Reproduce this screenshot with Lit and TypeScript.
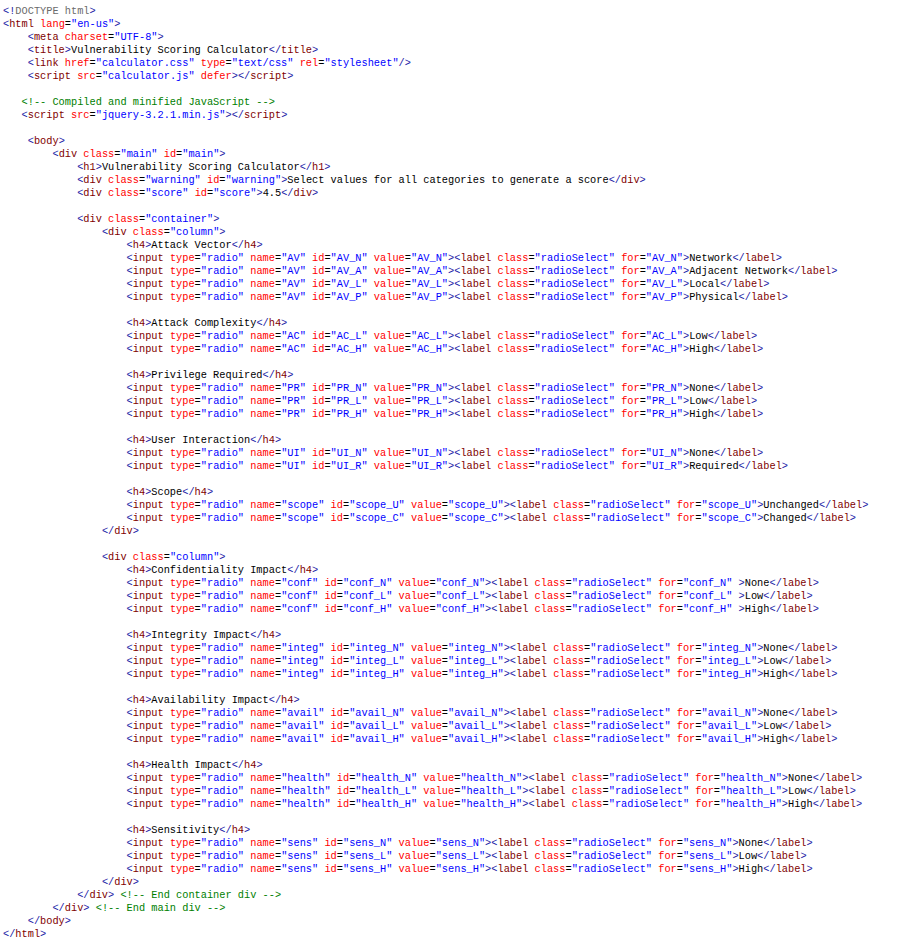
import { LitElement, html, css } from "lit";
import { customElement } from "lit/decorators.js";

const column1: [string, string, string[], string[]][] = [
  ["Attack Vector", "AV", ["N", "A", "L", "P"], ["Network", "Adjacent Network", "Local", "Physical"]],
  ["Attack Complexity", "AC", ["L", "H"], ["Low", "High"]],
  ["Privilege Required", "PR", ["N", "L", "H"], ["None", "Low", "High"]],
  ["User Interaction", "UI", ["N", "R"], ["None", "Required"]],
  ["Scope", "scope", ["U", "C"], ["Unchanged", "Changed"]],
];
const column2: [string, string, string[], string[]][] = [
  ["Confidentiality Impact", "conf", ["N", "L", "H"], ["None", "Low", "High"]],
  ["Integrity Impact", "integ", ["N", "L", "H"], ["None", "Low", "High"]],
  ["Availability Impact", "avail", ["N", "L", "H"], ["None", "Low", "High"]],
  ["Health Impact", "health", ["N", "L", "H"], ["None", "Low", "High"]],
  ["Sensitivity", "sens", ["N", "L", "H"], ["None", "Low", "High"]],
];

function group(cols: [string, string, string[], string[]][]): string[] {
  const out: string[] = [];
  cols.forEach(([title, name, keys, labels], gi) => {
    if (gi > 0) out.push("");
    out.push(`                    <h4>${title}</h4>`);
    keys.forEach((k, i) => {
      const id = `${name}_${k}`;
      const gap = name === "conf" ? " " : "";
      out.push(
        `                    <input type="radio" name="${name}" id="${id}" value="${id}"><label class="radioSelect" for="${id}"${gap}>${labels[i]}</label>`
      );
    });
  });
  return out;
}

const source: string[] = [
  `<!DOCTYPE html>`,
  `<html lang="en-us">`,
  `    <meta charset="UTF-8">`,
  `    <title>Vulnerability Scoring Calculator</title>`,
  `    <link href="calculator.css" type="text/css" rel="stylesheet"/>`,
  `    <script src="calculator.js" defer></script>`,
  ``,
  `   <!-- Compiled and minified JavaScript -->`,
  `   <script src="jquery-3.2.1.min.js"></script>`,
  ``,
  `    <body>`,
  `        <div class="main" id="main">`,
  `            <h1>Vulnerability Scoring Calculator</h1>`,
  `            <div class="warning" id="warning">Select values for all categories to generate a score</div>`,
  `            <div class="score" id="score">4.5</div>`,
  ``,
  `            <div class="container">`,
  `                <div class="column">`,
  ...group(column1),
  `                </div>`,
  ``,
  `                <div class="column">`,
  ...group(column2),
  `                </div>`,
  `            </div> <!-- End container div -->`,
  `        </div> <!-- End main div -->`,
  `    </body>`,
  `</html>`,
];

type Tok = { c: string; t: string };

function tokenize(line: string): Tok[] {
  const toks: Tok[] = [];
  const re = /<!--.*?-->|<!DOCTYPE html>|<\/?[a-zA-Z0-9]+(?:\s+[a-zA-Z-]+(?:="[^"]*")?)*\s*\/?>|[^<]+/g;
  for (const m of line.match(re) ?? []) {
    if (m.startsWith("<!--")) toks.push({ c: "cm", t: m });
    else if (m.startsWith("<!")) {
      toks.push({ c: "br", t: "<!" }, { c: "dt", t: "DOCTYPE html" }, { c: "br", t: ">" });
    } else if (m.startsWith("<")) {
      const parts = m.match(/^(<\/?)([a-zA-Z0-9]+)(.*?)(\/?>)$/)!;
      toks.push({ c: "br", t: parts[1] }, { c: "tg", t: parts[2] });
      for (const a of parts[3].match(/\s+|[a-zA-Z-]+|=|"[^"]*"/g) ?? []) {
        if (a === "=") toks.push({ c: "eq", t: a });
        else if (a.startsWith('"')) toks.push({ c: "va", t: a });
        else if (a.trim() === "") toks.push({ c: "tx", t: a });
        else toks.push({ c: "at", t: a });
      }
      toks.push({ c: "br", t: parts[4] });
    } else toks.push({ c: "tx", t: m });
  }
  return toks;
}

@customElement("app-root")
export class AppRoot extends LitElement {
  static styles = css`
    :host {
      display: block;
      width: 897px;
      height: 947px;
      background: #fff;
      overflow: hidden;
    }
    .code {
      margin: 0;
      padding: 5px 0 0 3px;
      font-family: "Liberation Mono", "DejaVu Sans Mono", monospace;
      font-size: 10.3px;
      line-height: 13px;
      color: #000;
      white-space: pre;
    }
    .line {
      display: block;
      height: 13px;
    }
    .dt { color: #6b6b6b; }
    .cm { color: #008000; }
    .br { color: #1a1aa6; }
    .tg { color: #800000; }
    .at { color: #ff0000; }
    .eq { color: #000; }
    .va { color: #0000ff; }
    .tx { color: #000; }
  `;

  render() {
    return html`<div class="code">${source.map(
      (l) => html`<span class="line">${tokenize(l).map((t) => html`<span class=${t.c}>${t.t}</span>`)}</span>`
    )}</div>`;
  }
}
